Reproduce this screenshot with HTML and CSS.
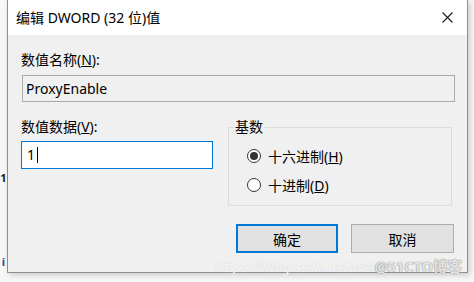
FILE: index.html
```html
<!DOCTYPE html>
<html lang="zh-CN">
<head>
<meta charset="utf-8">
<title>编辑 DWORD (32 位)值</title>
<link rel="stylesheet" href="styles.css">
</head>
<body>
<div class="desk">
  <div class="peek">
    <div class="peek-line peek-a"><span>1</span></div>
    <div class="peek-line peek-b"><span>i</span></div>
  </div>
  <div class="window">
    <div class="titlebar">
      <div class="title">编辑 DWORD (32 位)值</div>
      <div class="close">
        <svg width="11" height="11" viewBox="0 0 11 11"><path d="M0.5 0.5 L10.5 10.5 M10.5 0.5 L0.5 10.5" stroke="#1a1a1a" stroke-width="1.1" fill="none"/></svg>
      </div>
    </div>
    <div class="content">
      <div class="label">数值名称(<u>N</u>):</div>
      <div class="field field-name">ProxyEnable</div>
      <div class="row">
        <div class="col-data">
          <div class="label">数值数据(<u>V</u>):</div>
          <div class="field field-data">1<span class="caret"></span></div>
        </div>
        <fieldset class="group">
          <legend>基数</legend>
          <div class="radio-row"><span class="radio checked"></span><span>十六进制(<u>H</u>)</span></div>
          <div class="radio-row"><span class="radio"></span><span>十进制(<u>D</u>)</span></div>
        </fieldset>
      </div>
      <div class="buttons">
        <div class="btn btn-default">确定</div>
        <div class="btn">取消</div>
      </div>
    </div>
  </div>
  <div class="watermark"><span class="wm-url">https://blog.csdn.net/wei</span><span class="wm-brand">@51CTO博客</span></div>
</div>
</body>
</html>
```
FILE: styles.css
```css
html, body {
  margin: 0;
  padding: 0;
}
body {
  width: 474px;
  height: 282px;
  overflow: hidden;
  background: #f7f7f7;
  font-family: "Noto Sans", "Noto Sans CJK SC", sans-serif;
  font-size: 14px;
  color: #000;
}
.desk {
  position: relative;
  display: flex;
  width: 474px;
  height: 282px;
}
.peek {
  width: 7px;
  flex: none;
  display: flex;
  flex-direction: column;
  align-items: center;
}
.peek-line {
  white-space: nowrap;
  font-size: 11px;
  line-height: 16px;
}
.peek-a {
  margin-top: 170px;
  color: #222;
  font-weight: bold;
}
.peek-b {
  margin-top: 68px;
  color: #1f4e9a;
  font-weight: bold;
}
.window {
  width: 459px;
  height: 272px;
  flex: none;
  display: flex;
  flex-direction: column;
  border: 1px solid #8e8e8e;
  border-top: none;
  background: #f0f0f0;
  box-shadow: 2px 2px 6px rgba(0, 0, 0, 0.18);
}
.titlebar {
  height: 35px;
  background: #fff;
  display: flex;
  align-items: center;
  padding-left: 8px;
}
.title {
  flex: 1;
  font-size: 14px;
  line-height: 20px;
  margin-top: 1px;
}
.close {
  width: 40px;
  height: 35px;
  display: flex;
  align-items: center;
  justify-content: center;
}
.content {
  flex: 1;
  padding: 15px 12px 0 13px;
  display: flex;
  flex-direction: column;
}
.label {
  line-height: 20px;
  height: 20px;
}
.field {
  box-sizing: border-box;
  display: flex;
  align-items: center;
  line-height: 20px;
}
.field-name {
  margin: 5px 0 0 1px;
  height: 27px;
  border: 1px solid #ababab;
  background: #f0f0f0;
  padding-left: 3px;
}
.row {
  display: flex;
  gap: 15px;
  margin-top: 15px;
}
.col-data {
  width: 192px;
  flex: none;
}
.field-data {
  margin-top: 4px;
  height: 28px;
  border: 1px solid #0078d7;
  background: #fff;
  padding-left: 5px;
}
.caret {
  display: inline-block;
  width: 1px;
  height: 16px;
  background: #000;
  margin-left: 2px;
}
.group {
  margin: 0;
  width: 224px;
  box-sizing: border-box;
  height: 89px;
  border: 1px solid #dcdcdc;
  padding: 4px 0 0 5px;
  min-width: 0;
}
.group legend {
  padding: 0 2px 0 1px;
  line-height: 20px;
}
.radio-row {
  height: 29px;
  display: flex;
  align-items: center;
  padding-left: 13px;
}
.radio {
  box-sizing: border-box;
  width: 14px;
  height: 14px;
  border: 1px solid #333;
  border-radius: 50%;
  background: #fff;
  margin-right: 7px;
  display: flex;
  align-items: center;
  justify-content: center;
  flex: none;
}
.radio.checked::after {
  content: "";
  width: 8px;
  height: 8px;
  border-radius: 50%;
  background: #333;
}
.buttons {
  display: flex;
  justify-content: flex-end;
  gap: 13px;
  margin-top: 18px;
  margin-right: 1px;
}
.btn {
  box-sizing: border-box;
  width: 103px;
  height: 29px;
  border: 1px solid #adadad;
  background: #e1e1e1;
  display: flex;
  align-items: center;
  justify-content: center;
}
.btn-default {
  width: 102px;
  border: 2px solid #0078d7;
}
.watermark {
  position: absolute;
  left: 215px;
  top: 256px;
  font-size: 14.5px;
  line-height: 20px;
  white-space: nowrap;
  pointer-events: none;
}
.wm-url {
  color: rgba(255, 255, 255, 0.85);
  text-shadow: 0 0 1px #c4c4c4;
  font-style: italic;
}
.wm-brand {
  color: #e4e4e4;
  text-shadow: 0 0 1px #8f8f8f, 0 0 1px #8f8f8f;
  font-weight: bold;
}
```
